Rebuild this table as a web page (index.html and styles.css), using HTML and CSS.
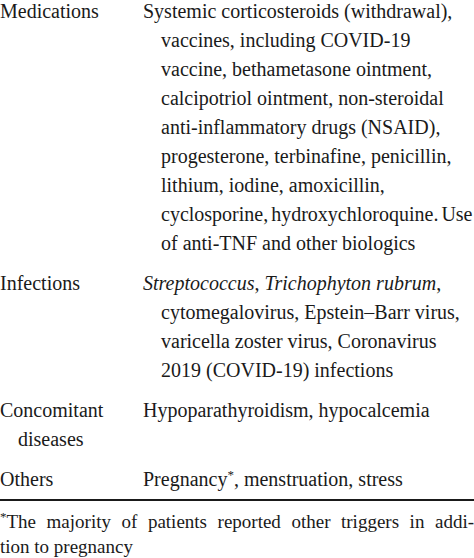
FILE: index.html
```html
<!DOCTYPE html>
<html>
<head>
<meta charset="utf-8">
<link rel="stylesheet" href="styles.css">
</head>
<body>
<div class="table">
  <div class="row">
    <div class="label">Medications</div>
    <div class="value">Systemic corticosteroids (withdrawal),<br>vaccines, including COVID-19<br>vaccine, bethametasone ointment,<br>calcipotriol ointment, non-steroidal<br>anti-inflammatory drugs (NSAID),<br>progesterone, terbinafine, penicillin,<br>lithium, iodine, amoxicillin,<br><span class="tight">cyclosporine, hydroxychloroquine. Use</span><br>of anti-TNF and other biologics</div>
  </div>
  <div class="row">
    <div class="label">Infections</div>
    <div class="value"><i>Streptococcus</i>, <i>Trichophyton rubrum</i>,<br>cytomegalovirus, Epstein–Barr virus,<br>varicella zoster virus, Coronavirus<br>2019 (COVID-19) infections</div>
  </div>
  <div class="row">
    <div class="label">Concomitant<br>diseases</div>
    <div class="value">Hypoparathyroidism, hypocalcemia</div>
  </div>
  <div class="row last">
    <div class="label">Others</div>
    <div class="value">Pregnancy<sup class="ast">*</sup>, menstruation, stress</div>
  </div>
</div>
<div class="note">
  <div class="note-line justify"><sup class="ast">*</sup>The majority of patients reported other triggers in addi-</div>
  <div class="note-line">tion to pregnancy</div>
</div>
</body>
</html>
```
FILE: styles.css
```css
html, body {
  margin: 0;
  padding: 0;
  background: #fff;
}
body {
  font-family: "Liberation Serif", "Times New Roman", serif;
  font-size: 20px;
  color: #1a1a1a;
  width: 474px;
  overflow: hidden;
}
.table {
  margin-top: -3px;
  border-bottom: 2px solid #1a1a1a;
}
.row {
  display: grid;
  grid-template-columns: 143px 1fr;
  line-height: 29px;
  padding-bottom: 11px;
}
.row.last {
  padding-bottom: 5px;
}
.label, .value {
  padding-left: 18px;
  text-indent: -18px;
  white-space: nowrap;
}
.tight {
  word-spacing: -2px;
}
.ast {
  font-size: 13px;
  line-height: 0;
  vertical-align: 7px;
}
.note {
  padding-top: 8px;
  font-size: 19px;
  line-height: 25px;
}
.note-line {
  white-space: nowrap;
}
.note-line.justify {
  white-space: normal;
  text-align: justify;
  text-align-last: justify;
}
```
